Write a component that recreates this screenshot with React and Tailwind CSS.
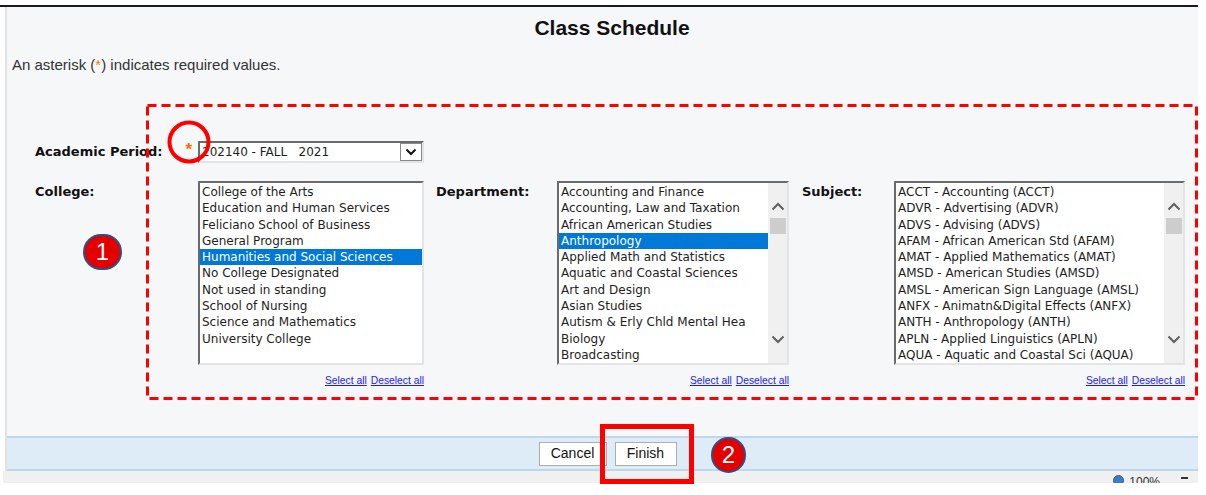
import React from "react"

const colleges = [
  "College of the Arts",
  "Education and Human Services",
  "Feliciano School of Business",
  "General Program",
  "Humanities and Social Sciences",
  "No College Designated",
  "Not used in standing",
  "School of Nursing",
  "Science and Mathematics",
  "University College",
]

const departments = [
  "Accounting and Finance",
  "Accounting, Law and Taxation",
  "African American Studies",
  "Anthropology",
  "Applied Math and Statistics",
  "Aquatic and Coastal Sciences",
  "Art and Design",
  "Asian Studies",
  "Autism & Erly Chld Mental Hea",
  "Biology",
  "Broadcasting",
]

const subjects = [
  "ACCT - Accounting (ACCT)",
  "ADVR - Advertising (ADVR)",
  "ADVS - Advising (ADVS)",
  "AFAM - African American Std (AFAM)",
  "AMAT - Applied Mathematics (AMAT)",
  "AMSD - American Studies (AMSD)",
  "AMSL - American Sign Language (AMSL)",
  "ANFX - Animatn&Digital Effects (ANFX)",
  "ANTH - Anthropology (ANTH)",
  "APLN - Applied Linguistics (APLN)",
  "AQUA - Aquatic and Coastal Sci (AQUA)",
]

const tahoma = { fontFamily: '"DejaVu Sans", sans-serif' }

function Chevron({ up }) {
  return (
    <svg width="14" height="9" viewBox="0 0 14 9">
      <polyline
        points={up ? "1.5,7.5 7,2 12.5,7.5" : "1.5,1.5 7,7 12.5,1.5"}
        fill="none"
        stroke="#5f5f5f"
        strokeWidth="2"
      />
    </svg>
  )
}

function ListBox({ items, selected, width, scroll }) {
  return (
    <div className={`flex flex-col items-end font-normal ${width}`}>
      <div className="flex h-[184px] w-full border-2 border-t-[#6b6b6b] border-l-[#6b6b6b] border-r-[#e4e4e4] border-b-[#e4e4e4] bg-white">
        <div className="flex-1 overflow-hidden pt-[1px] text-[12px] leading-[16.3px] text-[#1e1e1e]" style={tahoma}>
          {items.map((item) => (
            <div
              key={item}
              className={`whitespace-nowrap px-[2px] ${item === selected ? "bg-[#0078d7] text-white" : ""}`}
            >
              {item}
            </div>
          ))}
        </div>
        {scroll && (
          <div className="flex w-[19px] flex-col items-center bg-[#f0f0f0] py-[19px]">
            <Chevron up />
            <div className="mt-[7px] h-[16px] w-[16px] bg-[#cdcdcd]" />
            <div className="flex-1" />
            <Chevron />
          </div>
        )}
      </div>
      <div className="mt-[10px] flex gap-[4px] text-[10.3px] leading-[12px] text-[#1a1aff] underline" style={{ fontFamily: '"Liberation Sans", Arial, sans-serif' }}>
        <span>Select all</span>
        <span>Deselect all</span>
      </div>
    </div>
  )
}

export default function App() {
  return (
    <div className="relative h-[495px] w-[1206px] overflow-hidden bg-white" style={{ fontFamily: '"Liberation Sans", Arial, sans-serif' }}>
      <div className="h-[5px]" />
      <div className="h-[2px] w-[1198px] bg-[#1b1b1b]" />

      {/* main panel */}
      <div className="ml-[5px] flex h-[464px] w-[1193px] flex-col border-l-2 border-[#e2e2e2] bg-[#f6f7f9]">
        <div className="pl-[19px] pt-[9px] text-center text-[21px] font-bold leading-[24px] text-[#111]">
          Class Schedule
        </div>
        <div className="mt-[17px] pl-[5px] text-[15px] leading-[16px] text-[#333]">
          An asterisk (<span className="text-[#ff7a00]">*</span>) indicates required values.
        </div>

        {/* Academic period */}
        <div className="mt-[68px] flex items-center pl-[28px]">
          <div className="flex w-[163px] items-start justify-between pr-[6px] text-[13px] font-bold text-[#111]" style={tahoma}>
            <span>Academic Period:</span>
            <span className="-mt-[5px] text-[17px] font-bold text-[#ff6a00]" style={{ fontFamily: '"Liberation Sans", Arial, sans-serif' }}>*</span>
          </div>
          <div className="flex h-[22px] w-[226px] items-center border-2 border-t-[#6b6b6b] border-l-[#6b6b6b] border-r-[#e4e4e4] border-b-[#e4e4e4] bg-white">
            <span className="flex-1 whitespace-pre pl-[2px] text-[12px] text-[#1e1e1e]" style={tahoma}>
              202140 - FALL   2021
            </span>
            <div className="flex h-[18px] w-[22px] items-center justify-center border border-[#8a8a8a] bg-white">
              <svg width="12" height="8" viewBox="0 0 12 8">
                <polyline points="1.5,1.5 6,6 10.5,1.5" fill="none" stroke="#111" strokeWidth="2" />
              </svg>
            </div>
          </div>
        </div>

        {/* lists */}
        <div className="mt-[18px] flex pl-[28px] text-[13px] font-bold text-[#111]">
          <div className="w-[163px] pt-[1px]" style={tahoma}>College:</div>
          <ListBox items={colleges} selected="Humanities and Social Sciences" width="w-[226px]" />
          <div className="w-[133px] pl-[12px] pt-[1px]" style={tahoma}>Department:</div>
          <ListBox items={departments} selected="Anthropology" width="w-[232px]" scroll />
          <div className="w-[105px] pl-[13px] pt-[1px]" style={tahoma}>Subject:</div>
          <ListBox items={subjects} width="w-[291px]" scroll />
        </div>

        <div className="flex-1" />

        {/* button bar */}
        <div className="flex h-[35px] items-center justify-center gap-[8px] border-y-2 border-[#bcd7ee] bg-[#deecf8] pl-[10px]">
          <button className="h-[24px] w-[68px] border border-[#adadad] bg-white text-[14px] text-[#111]">Cancel</button>
          <button className="h-[24px] w-[62px] border border-[#adadad] bg-white text-[14px] text-[#111]">Finish</button>
        </div>
      </div>

      {/* status bar */}
      <div className="ml-[3px] flex h-[12px] w-[1195px] items-start justify-end overflow-hidden bg-[#f0f0f0] pr-[10px]">
        <div className="mt-[4px] flex items-start gap-[5px] text-[12px] leading-[14px] text-[#333]">
          <span className="h-[11px] w-[11px] rounded-full border border-[#456] bg-[#3a7bd5]" />
          <span>100%</span>
          <span className="ml-[16px] mt-[2px] h-[2px] w-[7px] bg-[#333]" />
        </div>
      </div>

      {/* annotations */}
      <svg className="pointer-events-none absolute left-0 top-0" width="1206" height="495">
        <rect x="147.5" y="105.5" width="1049" height="293" fill="none" stroke="#ff0000" strokeWidth="3" strokeDasharray="9 5" />
        <circle cx="189" cy="142" r="19.5" fill="none" stroke="#ff0000" strokeWidth="4" />
        <rect x="602.5" y="426.5" width="89" height="55" fill="none" stroke="#ff0000" strokeWidth="5" />
      </svg>
      <div className="absolute left-[83px] top-[234px] flex h-[36px] w-[39px] items-center justify-center rounded-full border-2 border-[#2c4f86] bg-[#e50000] text-[24px] leading-none text-white">
        1
      </div>
      <div className="absolute left-[711px] top-[437px] flex h-[36px] w-[35px] items-center justify-center rounded-full border-2 border-[#2c4f86] bg-[#e50000] text-[24px] leading-none text-white">
        2
      </div>
    </div>
  )
}
